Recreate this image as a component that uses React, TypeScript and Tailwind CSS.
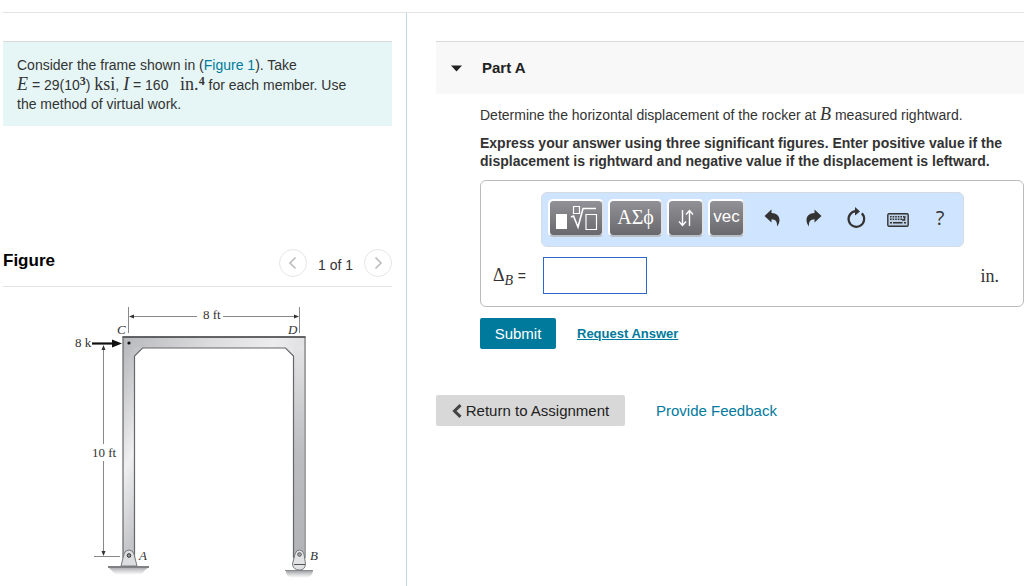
import type { ReactNode } from "react";

const serif = "font-['Liberation_Serif',serif]";

const MathVar = ({ children }: { children: ReactNode }) => (
  <i className={`${serif} text-[18px] leading-none`}>{children}</i>
);

const Unit = ({ children }: { children: ReactNode }) => (
  <span className={`${serif} text-[18px] leading-none`}>{children}</span>
);

const Power = ({ children }: { children: ReactNode }) => (
  <sup className={`${serif} -top-[5px] text-[12px] leading-none font-bold`}>{children}</sup>
);

const FrameFigure = () => (
  <svg
    viewBox="60 300 270 286"
    className="block ml-[57px] mt-[14px] w-[270px] h-[286px]"
    fontFamily="'Liberation Serif', serif"
    fontSize="13"
    fill="#333"
    role="img"
    aria-label="Frame pinned at A with a rocker at B"
  >
    <defs>
      <linearGradient id="beam" x1="0" y1="0" x2="1" y2="0.03">
        <stop offset="0" stopColor="#b8b9bc" />
        <stop offset="0.5" stopColor="#dcdcde" />
        <stop offset="0.85" stopColor="#ececee" />
        <stop offset="1" stopColor="#e2e2e4" />
      </linearGradient>
      <linearGradient id="leftPost" x1="0" y1="0" x2="0.1" y2="1">
        <stop offset="0" stopColor="#b4b5b8" />
        <stop offset="0.6" stopColor="#efeff1" />
        <stop offset="1" stopColor="#c4c5c8" />
      </linearGradient>
      <linearGradient id="rightPost" x1="0" y1="0" x2="0" y2="1">
        <stop offset="0" stopColor="#e4e4e6" />
        <stop offset="0.5" stopColor="#bcbdc0" />
        <stop offset="1" stopColor="#b2b3b6" />
      </linearGradient>
      <linearGradient id="ground" x1="0" y1="0" x2="0" y2="1">
        <stop offset="0" stopColor="#a2a3a6" />
        <stop offset="1" stopColor="#b8b9bc" stopOpacity="0" />
      </linearGradient>
    </defs>

    {/* frame */}
    <path d="M123 336H304V347H123Z" fill="url(#beam)" />
    <path d="M123 340H134V557H123Z" fill="url(#leftPost)" />
    <path d="M293 345H304V557H293Z" fill="url(#rightPost)" />
    <path d="M134 346H143L134 355Z" fill="#c4c5c8" />
    <path d="M293 355L285 346H293Z" fill="#e6e6e8" />
    <path
      d="M123 557V336H305V557M134.500 557V355L142.500 347H285.500L293.500 355V557"
      fill="none"
      stroke="#66676a"
      strokeWidth="1.200"
    />
    <path d="M122.500 336H305.500" stroke="#4a4b4d" strokeWidth="1.600" />
    <circle cx="129" cy="342" r="1.600" fill="#111" />

    {/* dimensions */}
    <path
      d="M128.500 306V332M299.500 306V332M130 315.500H197M223 315.500H298M103.500 345V443M103.500 460V554M94 555.500H120"
      fill="none"
      stroke="#888"
    />
    <path
      d="M129 315.500L134 313.500V317.500ZM299 315.500L294 313.500V317.500ZM103.500 344L101.500 349H105.500ZM103.500 555L101.500 550H105.500Z"
      fill="#333"
    />
    <path d="M92 342.500H114" stroke="#111" strokeWidth="2.200" />
    <path d="M122 342.500L112 338.500V346.500Z" fill="#111" />

    {/* pin support */}
    <path d="M108 566H149L144 570Q143 574 136 573Q125 575 115 573L112 570Z" fill="url(#ground)" />
    <path d="M108 566H149" stroke="#808184" strokeWidth="1.800" />
    <path
      d="M121 565L124 553Q125 549 129 549Q133 549 134 553L137 565Z"
      fill="#dcdddf"
      stroke="#77787b"
    />
    <circle cx="129" cy="554.500" r="1.800" fill="#999" stroke="#333" />

    {/* rocker support */}
    <path d="M286 570H313Q312 575 308 577H291Q286 575 286 570Z" fill="url(#ground)" />
    <path d="M285 569.500H313" stroke="#8a8b8e" />
    <path
      d="M295 553Q296 549 299.500 549Q303 549 304 553L305.500 563Q305 569 299.500 569Q293 569 292.500 563Z"
      fill="#e2e3e5"
      stroke="#77787b"
    />
    <path d="M294 563.500H305" stroke="#555" />
    <circle cx="299.500" cy="553.500" r="1.800" fill="#aaa" stroke="#555" />

    <text x="203" y="318">8 ft</text>
    <text x="75" y="346">8 k</text>
    <text x="92" y="456">10 ft</text>
    <g fontStyle="italic">
      <text x="117" y="333">C</text>
      <text x="288" y="333">D</text>
      <text x="139" y="559">A</text>
      <text x="310" y="559">B</text>
    </g>
  </svg>
);

const PagerButton = ({ label, d }: { label: string; d: string }) => (
  <button
    aria-label={label}
    className="flex h-7 w-7 items-center justify-center rounded-full border border-[#e6e6e6] bg-white text-[#bdbdbd]"
  >
    <svg viewBox="0 0 14 14" className="h-[14px] w-[14px]" fill="none" stroke="currentColor" strokeWidth="1.700">
      <path d={d} />
    </svg>
  </button>
);

const PaletteButton = ({ label, className, children }: { label: string; className: string; children: ReactNode }) => (
  <button
    aria-label={label}
    className={`flex h-[38px] items-center justify-center rounded-[5px] border-2 border-t-white border-l-white border-r-[#dfe3e8] border-b-[#b9bdc4] bg-linear-to-b from-[#919197] to-[#69696d] bg-clip-padding text-white ${className}`}
  >
    {children}
  </button>
);

const IconButton = ({ label, children }: { label: string; children: ReactNode }) => (
  <button aria-label={label} className="flex h-[38px] w-[42px] items-center justify-center text-[#333]">
    {children}
  </button>
);

const Toolbar = () => (
  <div className="flex h-[55px] w-[423px] items-start rounded-md border border-[#d5dbe3] bg-[#cfe5ff] pt-[6px] pl-[6px]">
    <div className="flex gap-1">
      <PaletteButton label="Templates" className="w-[56px]">
        <svg viewBox="0 0 44 28" className="h-7 w-11" fill="none" stroke="#fff">
          <path d="M2 10H13V25H2Z" fill="#fff" stroke="none" />
          <path d="M19.500 2.500H25.500V9.500H19.500Z" strokeWidth="1.200" />
          <path d="M17 13L19.500 12L24 23L29 4.500H42" strokeWidth="1.600" />
          <path d="M32 10.500H42.500V25.500H32Z" strokeWidth="1.200" />
        </svg>
      </PaletteButton>
      <PaletteButton label="Symbols" className={`w-[55px] pb-[3px] text-[20px] ${serif}`}>
        ΑΣϕ
      </PaletteButton>
      <PaletteButton label="Vertical arrows" className="w-[37px]">
        <svg viewBox="0 0 16 20" className="h-5 w-4" fill="none" stroke="#fff" strokeWidth="1.400">
          <path d="M4.500 2V17M1 13.500L4.500 17.500L8 13.500M11.500 18V3M8 6.500L11.500 2.500L15 6.500" />
        </svg>
      </PaletteButton>
      <PaletteButton label="Vector" className="w-[37px] pb-[3px] text-[17px]">
        vec
      </PaletteButton>
    </div>
    <div className="ml-[6px] flex">
      <IconButton label="Undo">
        <svg viewBox="0 0 16 18" className="h-[18px] w-4" fill="currentColor">
          <path d="M0.500 7L7.500 0.500V4C12.500 4 15.500 7 15.500 11C15.500 13.500 14.500 15.500 13 17.500C13.500 12.500 11.500 10.500 7.500 10.300V13.500Z" />
        </svg>
      </IconButton>
      <IconButton label="Redo">
        <svg viewBox="0 0 16 18" className="h-[18px] w-4" fill="currentColor">
          <path d="M15.500 7L8.500 0.500V4C3.500 4 0.500 7 0.500 11C0.500 13.500 1.500 15.500 3 17.500C2.500 12.500 4.500 10.500 8.500 10.300V13.500Z" />
        </svg>
      </IconButton>
      <IconButton label="Reset">
        <svg viewBox="0 0 20 22" className="h-[22px] w-5" fill="none" stroke="currentColor" strokeWidth="2.200">
          <path d="M15.800 6.400A7.800 7.800 0 1 1 10 4.200" />
          <path d="M9 0L14 4.500L9 8.500Z" fill="currentColor" stroke="none" />
        </svg>
      </IconButton>
      <IconButton label="Keyboard shortcuts">
        <svg viewBox="0 0 22 14" className="mt-1 h-[14px] w-[22px]" fill="none" stroke="currentColor">
          <rect x="0.800" y="0.800" width="20.400" height="12.400" rx="1.200" fill="#bcd0e6" strokeWidth="1.400" />
          <path d="M3 3.800H19M3 6.300H16" strokeDasharray="1.600 1" strokeWidth="1.400" />
          <path d="M17.500 3.500V7H15M3 9.700H5M6 9.700H15.500M17 9.700H19" strokeWidth="1.500" />
        </svg>
      </IconButton>
      <IconButton label="Help">
        <span className="font-['Open_Sans',sans-serif] text-[20px] leading-none">?</span>
      </IconButton>
    </div>
  </div>
);

const App = () => (
  <div className="min-h-screen bg-white pt-3 font-['Liberation_Sans',Arial,sans-serif] text-[14px] leading-[18px] text-[#333]">
    <div className="ml-[3px] border-t border-[#e3e3e3]" />
    <div className="flex">
      <aside className="w-[407px] shrink-0 border-r border-[#c5d5e4] pt-7 pr-[14px] pl-[3px]">
        <div className="border-t border-[#dadada] bg-[#e6f6f6] px-[14px] pt-[14px] pb-[12px] leading-[19px]">
          <p>
            Consider the frame shown in (<a href="#figure" className="text-[#007a9c]">Figure 1</a>). Take
          </p>
          <p>
            <MathVar>E</MathVar> = 29(10<Power>3</Power>) <Unit>ksi</Unit>, <MathVar>I</MathVar> = 160 &nbsp;{" "}
            <Unit>in.</Unit>
            <Power>4</Power> for each member. Use
          </p>
          <p>the method of virtual work.</p>
        </div>

        <section id="figure" className="mt-[123px]">
          <div className="flex items-center justify-between border-b border-[#e3e3e3] pb-[9px]">
            <h2 className="pb-[5px] text-[17px] font-bold text-black">Figure</h2>
            <div className="flex items-center gap-[11px]">
              <PagerButton label="Previous figure" d="M9.500 1.500L4 7L9.500 12.500" />
              <span className="pt-1">1 of 1</span>
              <PagerButton label="Next figure" d="M4.500 1.500L10 7L4.500 12.500" />
            </div>
          </div>
          <FrameFigure />
        </section>
      </aside>

      <main className="min-w-0 flex-1 pt-7 pl-[29px]">
        <div className="flex h-[53px] items-center border-t border-[#dadada] bg-[#f8f8f8] pl-[15px]">
          <button className="flex items-center gap-5 text-[15px] font-bold text-[#222]">
            <svg viewBox="0 0 11 7" className="h-[7px] w-[11px]" fill="currentColor">
              <path d="M0 0.500H11L5.500 6.500Z" />
            </svg>
            Part A
          </button>
        </div>

        <div className="pl-11">
          <p className="mt-[11px]">
            Determine the horizontal displacement of the rocker at <MathVar>B</MathVar> measured rightward.
          </p>
          <p className="mt-[10px] font-bold">
            Express your answer using three significant figures. Enter positive value if the displacement is rightward
            and negative value if the displacement is leftward.
          </p>

          <div className="mt-[10px] rounded-md border border-[#bbb] pt-[11px] pr-6 pb-3 pl-3">
            <div className="pl-12">
              <Toolbar />
            </div>
            <div className="mt-[10px] flex items-center">
              <label htmlFor="answer" className={`w-[50px] text-[18px] ${serif}`}>
                Δ<sub className="text-[14px] italic">B</sub>{" "}
                <span className="font-['Liberation_Sans',sans-serif] text-[14px]">=</span>
              </label>
              <input id="answer" type="text" className="h-[37px] w-[104px] border border-[#2f66cc] bg-white px-2 outline-none" />
              <span className={`ml-auto text-[18px] ${serif}`}>in.</span>
            </div>
          </div>

          <div className="mt-[11px] flex items-center gap-[21px]">
            <button className="h-[31px] w-[76px] rounded-xs bg-[#007a9c] text-[15px] text-white">Submit</button>
            <a href="#answer" className="text-[13px] font-bold text-[#007a9c] underline">
              Request Answer
            </a>
          </div>
        </div>

        <div className="mt-[46px] flex items-center gap-[31px]">
          <button className="flex h-[31px] w-[189px] items-center justify-center gap-1 rounded-xs bg-[#d8d8d8] text-[15px] text-[#222]">
            <svg viewBox="0 0 10 14" className="h-[14px] w-[10px]" fill="none" stroke="#444" strokeWidth="3">
              <path d="M8.500 1.200L2.500 7L8.500 12.800" />
            </svg>
            Return to Assignment
          </button>
          <a href="#feedback" className="text-[15px] text-[#007a9c]">
            Provide Feedback
          </a>
        </div>
      </main>
    </div>
  </div>
);

export default App;
